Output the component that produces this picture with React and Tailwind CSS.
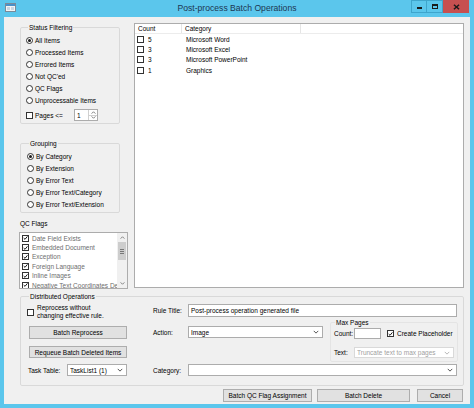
import React from "react";

function Check({ checked, size = 7 }) {
  return (
    <span
      className="shrink-0 border border-[#333] bg-white flex items-center justify-center"
      style={{ width: size, height: size }}
    >
      {checked && (
        <svg viewBox="0 0 7 7" className="w-[6px] h-[6px]">
          <path d="M1 3.6 L2.8 5.4 L6.2 1.2" stroke="#1a1a1a" strokeWidth="1.4" fill="none" />
        </svg>
      )}
    </span>
  );
}

function Radio({ checked, label }) {
  return (
    <div className="flex items-center h-[12px]">
      <span className="shrink-0 w-[7px] h-[7px] rounded-full border border-[#333] bg-white flex items-center justify-center">
        {checked && <span className="w-[3px] h-[3px] rounded-full bg-[#1a1a1a]" />}
      </span>
      <span className="ml-[2px] whitespace-nowrap">{label}</span>
    </div>
  );
}

function Chevron({ color = "#444" }) {
  return (
    <svg viewBox="0 0 8 5" className="w-[6px] h-[4px]">
      <path d="M1 1 L4 4 L7 1" stroke={color} strokeWidth="1.2" fill="none" />
    </svg>
  );
}

function Select({ text, className, disabled }) {
  return (
    <div
      className={
        "flex items-center border bg-white pl-[2px] pr-[3px] " +
        (disabled ? "border-[#d9d9d9] text-[#a0a0a0] " : "border-[#acacac] ") +
        className
      }
    >
      <span className="flex-1 whitespace-nowrap overflow-hidden">{text}</span>
      <Chevron color={disabled ? "#b0b0b0" : "#444"} />
    </div>
  );
}

function Button({ children, className }) {
  return (
    <div
      className={
        "flex items-center justify-center bg-[#e1e1e1] border border-[#adadad] whitespace-nowrap " +
        className
      }
    >
      {children}
    </div>
  );
}

export default function App() {
  const rows = [
    ["5", "Microsoft Word"],
    ["3", "Microsoft Excel"],
    ["3", "Microsoft PowerPoint"],
    ["1", "Graphics"],
  ];
  const flags = [
    "Date Field Exists",
    "Embedded Document",
    "Exception",
    "Foreign Language",
    "Inline Images",
    "Negative Text Coordinates De",
  ];
  return (
    <div className="w-[474px] h-[408px] bg-[#5bc6ec] flex flex-col font-['Liberation_Sans',Arial,sans-serif] text-[6.5px] leading-[9px] text-[#000] overflow-hidden">
      {/* Title bar */}
      <div className="h-[17px] flex items-start shrink-0">
        <div className="w-[16px] h-[13px] flex items-center justify-end pt-[1px]">
          <svg viewBox="0 0 11 9" className="w-[11px] h-[9px]">
            <rect x="0.5" y="0.5" width="10" height="8" fill="#f4f4f4" stroke="#7a8a99" />
            <rect x="1" y="1" width="9" height="2" fill="#4a90c8" />
            <rect x="2" y="4" width="3" height="3" fill="#c9d6e2" />
            <rect x="6" y="4" width="3" height="3" fill="#c9d6e2" />
          </svg>
        </div>
        <div className="flex-1 h-[17px] flex items-center justify-center pl-[47px] text-[8.6px] text-[#1d3752]">
          Post-process Batch Operations
        </div>
        <div className="flex h-[13px]">
          <div className="w-[16px] h-[13px] border border-[#3fa5cc] flex items-end justify-center pb-[3px]">
            <span className="w-[5px] h-[2px] bg-[#1a1a1a]" />
          </div>
          <div className="w-[16px] h-[13px] border-y border-r border-[#3fa5cc] flex items-center justify-center">
            <span className="w-[6px] h-[5px] border border-t-2 border-[#1a1a1a]" />
          </div>
          <div className="w-[26px] h-[13px] bg-[#c75050] flex items-center justify-center">
            <svg viewBox="0 0 8 7" className="w-[7px] h-[6px]">
              <path d="M1 0.8 L7 6.2 M7 0.8 L1 6.2" stroke="#1a1a1a" strokeWidth="1.7" />
            </svg>
          </div>
        </div>
        <div className="w-[5px]" />
      </div>

      {/* Body */}
      <div className="mx-[4px] h-[387px] bg-[#f0f0f0] flex flex-col">
        {/* Top row */}
        <div className="h-[273px] flex shrink-0">
          {/* Left panel */}
          <div className="w-[130px] flex flex-col">
            <fieldset className="ml-[16px] mt-[6px] w-[100px] border border-[#d9d9d9] rounded-[2px] pl-[5px] pt-[2px] pb-[1px]">
              <legend className="ml-[2px] px-[1px] h-[9px]">Status Filtering</legend>
              <Radio checked label="All Items" />
              <Radio label="Processed Items" />
              <Radio label="Errored Items" />
              <Radio label="Not QC'ed" />
              <Radio label="QC Flags" />
              <Radio label="Unprocessable Items" />
              <div className="flex items-center h-[14px] mt-[2px]">
                <Check />
                <span className="ml-[2px] w-[39px]">Pages &lt;=</span>
                <div className="w-[24px] h-[12px] border border-[#acacac] bg-white flex items-center">
                  <span className="flex-1 pl-[2px]">1</span>
                  <div className="w-[9px] h-[10px] flex flex-col border-l border-[#d0d0d0]">
                    <div className="flex-1 flex items-center justify-center border-b border-[#d0d0d0]">
                      <svg viewBox="0 0 6 4" className="w-[5px] h-[3px]"><path d="M0.5 3.5 L3 1 L5.5 3.5" stroke="#555" fill="none" /></svg>
                    </div>
                    <div className="flex-1 flex items-center justify-center">
                      <svg viewBox="0 0 6 4" className="w-[5px] h-[3px]"><path d="M0.5 0.5 L3 3 L5.5 0.5" stroke="#555" fill="none" /></svg>
                    </div>
                  </div>
                </div>
              </div>
            </fieldset>

            <fieldset className="ml-[16px] mt-[15px] w-[100px] border border-[#d9d9d9] rounded-[2px] pl-[6px] pt-[2px] pb-[2px]">
              <legend className="ml-[2px] px-[1px] h-[9px]">Grouping</legend>
              <Radio checked label="By Category" />
              <Radio label="By Extension" />
              <Radio label="By Error Text" />
              <Radio label="By Error Text/Category" />
              <Radio label="By Error Text/Extension" />
            </fieldset>

            <div className="ml-[16px] mt-[6px] h-[9px]">QC Flags</div>
            <div className="ml-[15px] mt-[4px] w-[109px] h-[57px] border border-[#acacac] bg-white flex">
              <div className="flex-1 flex flex-col overflow-hidden pl-[2px] pt-[0.5px] text-[#6d6d6d]">
                {flags.map((f) => (
                  <div key={f} className="h-[9.4px] flex items-center shrink-0">
                    <Check checked size={7} />
                    <span className="ml-[3px] whitespace-nowrap">{f}</span>
                  </div>
                ))}
              </div>
              <div className="w-[10px] flex flex-col bg-[#f0f0f0]">
                <div className="h-[9px] flex items-center justify-center">
                  <svg viewBox="0 0 6 4" className="w-[5px] h-[3px]"><path d="M0.5 3.5 L3 1 L5.5 3.5" stroke="#606060" fill="none" /></svg>
                </div>
                <div className="mx-[1px] h-[18px] bg-[#cdcdcd] flex flex-col items-center justify-center gap-[1px]">
                  <span className="w-[4px] h-px bg-[#777]" />
                  <span className="w-[4px] h-px bg-[#777]" />
                  <span className="w-[4px] h-px bg-[#777]" />
                </div>
                <div className="flex-1" />
                <div className="h-[9px] flex items-center justify-center">
                  <svg viewBox="0 0 6 4" className="w-[5px] h-[3px]"><path d="M0.5 0.5 L3 3 L5.5 0.5" stroke="#606060" fill="none" /></svg>
                </div>
              </div>
            </div>
          </div>

          {/* List view */}
          <div className="mt-[6px] w-[330px] h-[265px] border border-[#acacac] bg-white flex flex-col">
            <div className="h-[10px] flex border-b border-[#ececec] shrink-0">
              <div className="w-[47px] border-r border-[#e5e5e5] pl-[3px] flex items-center">Count</div>
              <div className="w-[119px] border-r border-[#e5e5e5] pl-[3px] flex items-center">Category</div>
            </div>
            {rows.map(([c, n], i) => (
              <div key={i} className="h-[10.3px] flex items-center shrink-0">
                <div className="w-[48px] flex items-center pl-[2px]">
                  <Check />
                  <span className="ml-[4px]">{c}</span>
                </div>
                <div className="pl-[3px]">{n}</div>
              </div>
            ))}
          </div>
        </div>

        {/* Distributed Operations */}
        <fieldset className="ml-[16px] mt-[2px] w-[444px] h-[94px] border border-[#d9d9d9] rounded-[2px] pl-[6px] shrink-0">
          <legend className="ml-[2px] px-[1px] h-[9px]">Distributed Operations</legend>
          <div className="flex">
            {/* Left column */}
            <div className="w-[100px] flex flex-col">
              <div className="mt-[3px] h-[16px] flex items-center">
                <Check />
                <div className="ml-[3px] leading-[8px]">
                  <div>Reprocess without</div>
                  <div>changing effective rule.</div>
                </div>
              </div>
              <Button className="mt-[6px] ml-[2px] w-[98px] h-[13px]">Batch Reprocess</Button>
              <Button className="mt-[7px] ml-[2px] w-[98px] h-[12px]">Requeue Batch Deleted Items</Button>
              <div className="mt-[6px] h-[12px] flex items-center">
                <span className="ml-[1px] w-[39px]">Task Table:</span>
                <Select text="TaskList1 (1)" className="w-[60px] h-[12px]" />
              </div>
            </div>

            {/* Right area */}
            <div className="ml-[26px] flex flex-col">
              <div className="mt-[3px] h-[13px] flex items-center">
                <span className="w-[35px]">Rule Title:</span>
                <div className="w-[269px] h-[13px] border border-[#acacac] bg-white flex items-center pl-[2px]">
                  Post-process operation generated file
                </div>
              </div>
              <div className="mt-[1px] h-[44px] flex">
                <div className="mt-[8px] h-[12px] flex items-center">
                  <span className="w-[35px]">Action:</span>
                  <Select text="Image" className="w-[135px] h-[12px]" />
                </div>
                <fieldset className="ml-[7px] w-[128px] h-[44px] border border-[#e4e4e4] rounded-[2px] pl-[3px]">
                  <legend className="ml-[1px] px-[1px] h-[9px]">Max Pages</legend>
                  <div className="mt-[1px] h-[11px] flex items-center">
                    <span className="w-[20px]">Count:</span>
                    <div className="w-[27px] h-[11px] border border-[#acacac] bg-white" />
                    <span className="ml-[6px]"><Check checked /></span>
                    <span className="ml-[3px] whitespace-nowrap">Create Placeholder</span>
                  </div>
                  <div className="mt-[8px] h-[11px] flex items-center">
                    <span className="w-[20px]">Text:</span>
                    <Select disabled text="Truncate text to max pages" className="w-[100px] h-[11px]" />
                  </div>
                </fieldset>
              </div>
              <div className="mt-[2px] h-[12px] flex items-center">
                <span className="w-[35px]">Category:</span>
                <Select text="" className="w-[269px] h-[12px]" />
              </div>
            </div>
          </div>
        </fieldset>

        {/* Bottom buttons */}
        <div className="mt-[3px] h-[13px] flex shrink-0">
          <Button className="ml-[219px] w-[89px] h-[13px]">Batch QC Flag Assignment</Button>
          <Button className="ml-[5px] w-[93px] h-[13px]">Batch Delete</Button>
          <Button className="ml-[7px] w-[46px] h-[13px]">Cancel</Button>
        </div>
      </div>
    </div>
  );
}
